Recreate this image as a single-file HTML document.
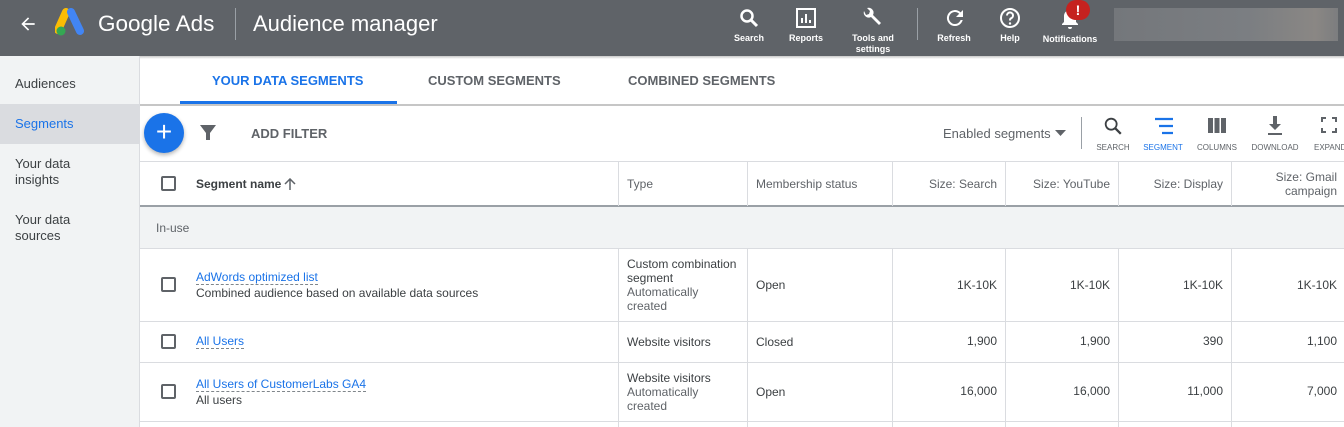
<!DOCTYPE html>
<html><head><meta charset="utf-8"><style>
*{box-sizing:border-box;margin:0;padding:0}
body{width:1344px;height:427px;overflow:hidden;font-family:"Liberation Sans",Arial,sans-serif;background:#fff;position:relative;color:#3c4043}
.a{position:absolute}
.hdr{left:0;top:0;width:1344px;height:56px;background:#5f6368}
.hl{color:#fff;font-size:9px;text-align:center;font-weight:bold;line-height:11px}
.side{left:0;top:56px;width:140px;height:371px;background:#f1f3f4;border-right:1px solid #dadce0}
.si{position:absolute;left:15px;font-size:13px;color:#3c4043;line-height:16px}
.tab{font-size:13px;font-weight:bold;color:#5f6368;top:73px}
.th{font-size:12px;color:#5f6368}
.vl{position:absolute;width:1px;background:#dadce0}
.hl2{position:absolute;height:1px;background:#dadce0;left:140px;width:1204px}
.cb{position:absolute;left:161px;width:15px;height:15px;border:2px solid #5f6368;border-radius:2px}
.t{position:absolute;font-size:12px;color:#3c4043;line-height:14px}
.lk{color:#1a73e8;border-bottom:1px dashed #80868b}
.r{text-align:right}
.tl{font-size:8px;color:#5f6368;text-align:center;top:143px}
</style></head><body>
<div class="a hdr"></div>
<svg class="a" style="left:18px;top:14px" width="20" height="20" viewBox="0 0 24 24"><path d="M20 11H7.8l5.6-5.6L12 4l-8 8 8 8 1.4-1.4L7.8 13H20z" fill="#fff"/></svg>
<svg class="a" style="left:55px;top:8px" width="32" height="30" viewBox="0 0 32 30"><path d="M11 4 L3 22" stroke="#fbbc04" stroke-width="8" stroke-linecap="round"/><path d="M16 4 L25 23" stroke="#4285f4" stroke-width="8" stroke-linecap="round"/><circle cx="6" cy="23" r="4.5" fill="#34a853"/></svg>
<div class="a" style="left:98px;top:11px;font-size:22.5px;color:#fff">Google Ads</div>
<div class="a" style="left:235px;top:8px;width:1px;height:32px;background:#9aa0a6"></div>
<div class="a" style="left:253px;top:11px;font-size:22px;color:#fff">Audience manager</div>
<svg class="a" style="left:737px;top:6px" width="24" height="24" viewBox="0 0 24 24"><circle cx="10" cy="10" r="5.5" stroke="#fff" stroke-width="2.5" fill="none"/><path d="M14 14l6 6" stroke="#fff" stroke-width="3"/></svg>
<div class="a hl" style="left:729px;top:33px;width:40px">Search</div>
<svg class="a" style="left:794px;top:6px" width="24" height="24" viewBox="0 0 24 24"><rect x="3" y="3" width="18" height="18" stroke="#fff" stroke-width="2" fill="none"/><path d="M8 17v-5M12 17V8M16 17v-3" stroke="#fff" stroke-width="2"/></svg>
<div class="a hl" style="left:786px;top:33px;width:40px">Reports</div>
<svg class="a" style="left:860px;top:5px" width="24" height="24" viewBox="0 0 24 24"><path d="M4 6a5 5 0 0 0 7 6l8 8 2-2-8-8a5 5 0 0 0-6-7l3 3-1 3-3 1z" fill="#fff"/></svg>
<div class="a hl" style="left:848px;top:33px;width:50px">Tools and<br>settings</div>
<div class="a" style="left:917px;top:8px;width:1px;height:32px;background:#9aa0a6"></div>
<svg class="a" style="left:943px;top:6px" width="24" height="24" viewBox="0 0 24 24"><path d="M17.6 6.4A8 8 0 1 0 19.7 14h-2.1a6 6 0 1 1-1.4-6.2L13 11h7V4z" fill="#fff"/></svg>
<div class="a hl" style="left:934px;top:33px;width:40px">Refresh</div>
<svg class="a" style="left:998px;top:6px" width="24" height="24" viewBox="0 0 24 24"><circle cx="12" cy="12" r="9" stroke="#fff" stroke-width="2" fill="none"/><path d="M9 9.5a3 3 0 1 1 4 2.8c-1 .5-1 1-1 2.2" stroke="#fff" stroke-width="2" fill="none"/><circle cx="12" cy="17.5" r="1.2" fill="#fff"/></svg>
<div class="a hl" style="left:990px;top:33px;width:40px">Help</div>
<svg class="a" style="left:1058px;top:7px" width="24" height="24" viewBox="0 0 24 24"><path d="M12 3a6 6 0 0 0-6 6v6l-2 2v1h16v-1l-2-2V9a6 6 0 0 0-6-6zm-2 17a2 2 0 0 0 4 0z" fill="#fff"/></svg>
<div class="a" style="left:1066px;top:0;width:24px;height:20px;border-radius:12px;background:#c5221f;color:#fff;font-weight:bold;font-size:14px;text-align:center;line-height:20px">!</div>
<div class="a hl" style="left:1040px;top:34px;width:60px">Notifications</div>
<div class="a" style="left:1114px;top:8px;width:224px;height:33px;background:linear-gradient(90deg,#74777b,#7b7e82 60%,#8a8784 90%,#7c7d7f)"></div>
<div class="a side"></div>
<div class="a" style="left:0;top:104px;width:139px;height:40px;background:#dadce0"></div>
<div class="si" style="top:76px">Audiences</div>
<div class="si" style="top:116px;color:#1a73e8">Segments</div>
<div class="si" style="top:156px">Your data<br>insights</div>
<div class="si" style="top:212px">Your data<br>sources</div>
<div class="a" style="left:140px;top:56px;width:1204px;height:3px;background:linear-gradient(#c8c8c8,#fff)"></div>
<div class="a tab" style="left:212px;color:#1a73e8">YOUR DATA SEGMENTS</div>
<div class="a tab" style="left:428px">CUSTOM SEGMENTS</div>
<div class="a tab" style="left:628px">COMBINED SEGMENTS</div>
<div class="a" style="left:180px;top:101px;width:217px;height:3px;background:#1a73e8"></div>
<div class="a" style="left:140px;top:104px;width:1204px;height:2px;background:#c6c6c6"></div>
<div class="a" style="left:144px;top:113px;width:40px;height:40px;border-radius:50%;background:#1a73e8;box-shadow:0 2px 4px rgba(0,0,0,.3)"></div>
<div class="a" style="left:144px;top:113px;width:40px;height:40px;color:#fff;font-size:28px;text-align:center;line-height:38px">+</div>
<svg class="a" style="left:199px;top:124px" width="18" height="18" viewBox="0 0 18 18"><path d="M1 1h16l-6 8v7h-4V9z" fill="#5f6368"/></svg>
<div class="a" style="left:251px;top:126px;font-size:13px;font-weight:bold;color:#5f6368">ADD FILTER</div>
<div class="a" style="left:943px;top:126px;font-size:13px;color:#5f6368">Enabled segments</div>
<svg class="a" style="left:1055px;top:130px" width="12" height="6"><path d="M0 0h11L5.5 6z" fill="#5f6368"/></svg>
<div class="a" style="left:1081px;top:117px;width:1px;height:32px;background:#9aa0a6"></div>
<svg class="a" style="left:1102px;top:115px" width="22" height="22" viewBox="0 0 24 24"><circle cx="10" cy="10" r="6" stroke="#3c4043" stroke-width="2" fill="none"/><path d="M14.5 14.5l6 6" stroke="#3c4043" stroke-width="2.5"/></svg>
<div class="a tl" style="left:1093px;width:40px">SEARCH</div>
<svg class="a" style="left:1153px;top:116px" width="22" height="20" viewBox="0 0 22 20"><path d="M2 3h18M6 10h14M9 17h11" stroke="#1a73e8" stroke-width="2.2"/></svg>
<div class="a tl" style="left:1140px;width:46px;color:#1a73e8">SEGMENT</div>
<svg class="a" style="left:1207px;top:117px" width="20" height="17"><path d="M1 1h5v15H1zM7.5 1h5v15h-5zM14 1h5v15h-5z" fill="#5f6368"/></svg>
<div class="a tl" style="left:1194px;width:46px">COLUMNS</div>
<svg class="a" style="left:1266px;top:116px" width="18" height="20"><path d="M7 0h4v8h4l-6 6-6-6h4zM2 17h14v2H2z" fill="#5f6368"/></svg>
<div class="a tl" style="left:1250px;width:50px">DOWNLOAD</div>
<svg class="a" style="left:1321px;top:117px" width="16" height="16"><path d="M1 5V1h4M11 1h4v4M15 11v4h-4M5 15H1v-4" stroke="#5f6368" stroke-width="2" fill="none"/></svg>
<div class="a tl" style="left:1314px;width:40px;text-align:left">EXPAND</div>
<div class="hl2" style="top:161px"></div>
<div class="cb" style="top:176px"></div>
<div class="a th" style="left:196px;top:177px;font-weight:bold;color:#3c4043">Segment name</div>
<svg class="a" style="left:284px;top:178px" width="12" height="12"><path d="M6 1v11M1 6l5-5 5 5" stroke="#5f6368" stroke-width="1.5" fill="none"/></svg>
<div class="a th" style="left:627px;top:177px">Type</div>
<div class="a th" style="left:756px;top:177px">Membership status</div>
<div class="a th r" style="left:892px;width:105px;top:177px">Size: Search</div>
<div class="a th r" style="left:1005px;width:105px;top:177px">Size: YouTube</div>
<div class="a th r" style="left:1118px;width:105px;top:177px">Size: Display</div>
<div class="a th r" style="left:1231px;width:106px;top:170px;line-height:14px">Size: Gmail<br>campaign</div>
<div class="a" style="left:140px;top:205px;width:1204px;height:2px;background:#9aa0a6"></div>
<div class="a" style="left:140px;top:207px;width:1204px;height:41px;background:#f1f3f4"></div>
<div class="t" style="left:156px;top:221px;color:#5f6368">In-use</div>
<div class="hl2" style="top:248px"></div>
<div class="hl2" style="top:321px"></div>
<div class="hl2" style="top:362px"></div>
<div class="hl2" style="top:421px"></div>
<div class="vl" style="left:618px;top:162px;height:44px"></div><div class="vl" style="left:618px;top:249px;height:178px"></div>
<div class="vl" style="left:747px;top:162px;height:44px"></div><div class="vl" style="left:747px;top:249px;height:178px"></div>
<div class="vl" style="left:892px;top:162px;height:44px"></div><div class="vl" style="left:892px;top:249px;height:178px"></div>
<div class="vl" style="left:1005px;top:162px;height:44px"></div><div class="vl" style="left:1005px;top:249px;height:178px"></div>
<div class="vl" style="left:1118px;top:162px;height:44px"></div><div class="vl" style="left:1118px;top:249px;height:178px"></div>
<div class="vl" style="left:1231px;top:162px;height:44px"></div><div class="vl" style="left:1231px;top:249px;height:178px"></div>

<div class="cb" style="top:277px"></div>
<div class="t" style="left:196px;top:270px"><span class="lk">AdWords optimized list</span></div>
<div class="t" style="left:196px;top:286px">Combined audience based on available data sources</div>
<div class="t" style="left:627px;top:257px">Custom combination<br>segment<br><span style="color:#5f6368">Automatically<br>created</span></div>
<div class="t" style="left:756px;top:278px">Open</div>
<div class="t r" style="left:892px;width:105px;top:278px">1K-10K</div>
<div class="t r" style="left:1005px;width:105px;top:278px">1K-10K</div>
<div class="t r" style="left:1118px;width:105px;top:278px">1K-10K</div>
<div class="t r" style="left:1231px;width:106px;top:278px">1K-10K</div>

<div class="cb" style="top:334px"></div>
<div class="t" style="left:196px;top:334px"><span class="lk">All Users</span></div>
<div class="t" style="left:627px;top:335px">Website visitors</div>
<div class="t" style="left:756px;top:335px">Closed</div>
<div class="t r" style="left:892px;width:105px;top:334px">1,900</div>
<div class="t r" style="left:1005px;width:105px;top:334px">1,900</div>
<div class="t r" style="left:1118px;width:105px;top:334px">390</div>
<div class="t r" style="left:1231px;width:106px;top:334px">1,100</div>

<div class="cb" style="top:384px"></div>
<div class="t" style="left:196px;top:377px"><span class="lk">All Users of CustomerLabs GA4</span></div>
<div class="t" style="left:196px;top:393px">All users</div>
<div class="t" style="left:627px;top:371px">Website visitors<br><span style="color:#5f6368">Automatically<br>created</span></div>
<div class="t" style="left:756px;top:385px">Open</div>
<div class="t r" style="left:892px;width:105px;top:384px">16,000</div>
<div class="t r" style="left:1005px;width:105px;top:384px">16,000</div>
<div class="t r" style="left:1118px;width:105px;top:384px">11,000</div>
<div class="t r" style="left:1231px;width:106px;top:384px">7,000</div>
</body></html>
